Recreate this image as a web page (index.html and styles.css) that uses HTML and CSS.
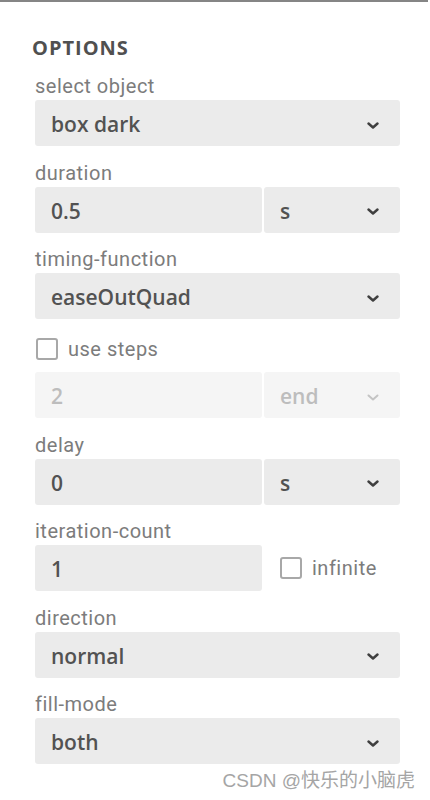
FILE: index.html
```html
<!DOCTYPE html>
<html lang="en">
<head>
<meta charset="utf-8">
<title>Options</title>
<link rel="stylesheet" href="styles.css">
</head>
<body>
<div class="topline"></div>
<section class="panel">
  <h2 class="title">OPTIONS</h2>

  <div class="field">
    <div class="label">select object</div>
    <div class="select"><span class="value">box dark</span><svg class="chev" viewBox="0 0 12 7"><path d="M1.5 1.5 L6 5.5 L10.5 1.5"/></svg></div>
  </div>

  <div class="field">
    <div class="label">duration</div>
    <div class="row">
      <div class="input"><span class="value">0.5</span></div>
      <div class="select"><span class="value">s</span><svg class="chev" viewBox="0 0 12 7"><path d="M1.5 1.5 L6 5.5 L10.5 1.5"/></svg></div>
    </div>
  </div>

  <div class="field">
    <div class="label">timing-function</div>
    <div class="select"><span class="value">easeOutQuad</span><svg class="chev" viewBox="0 0 12 7"><path d="M1.5 1.5 L6 5.5 L10.5 1.5"/></svg></div>
  </div>

  <div class="check steps-check"><span class="box"></span><span class="check-text">use steps</span></div>

  <div class="row disabled">
    <div class="input"><span class="value">2</span></div>
    <div class="select"><span class="value">end</span><svg class="chev" viewBox="0 0 12 7"><path d="M1.5 1.5 L6 5.5 L10.5 1.5"/></svg></div>
  </div>

  <div class="field">
    <div class="label">delay</div>
    <div class="row">
      <div class="input"><span class="value">0</span></div>
      <div class="select"><span class="value">s</span><svg class="chev" viewBox="0 0 12 7"><path d="M1.5 1.5 L6 5.5 L10.5 1.5"/></svg></div>
    </div>
  </div>

  <div class="field">
    <div class="label">iteration-count</div>
    <div class="row row-check">
      <div class="input"><span class="value">1</span></div>
      <div class="check"><span class="box"></span><span class="check-text">infinite</span></div>
    </div>
  </div>

  <div class="field">
    <div class="label">direction</div>
    <div class="select"><span class="value">normal</span><svg class="chev" viewBox="0 0 12 7"><path d="M1.5 1.5 L6 5.5 L10.5 1.5"/></svg></div>
  </div>

  <div class="field">
    <div class="label">fill-mode</div>
    <div class="select"><span class="value">both</span><svg class="chev" viewBox="0 0 12 7"><path d="M1.5 1.5 L6 5.5 L10.5 1.5"/></svg></div>
  </div>
</section>
<div class="watermark">CSDN @快乐的小脑虎</div>
</body>
</html>
```

FILE: styles.css
```css
html, body {
  margin: 0;
  padding: 0;
  background: #ffffff;
}

body {
  width: 430px;
  font-family: Roboto, "Liberation Sans", sans-serif;
}

.topline {
  width: 428px;
  height: 2px;
  background: #858585;
}

.panel {
  padding: 0 30px 0 35px;
  width: 365px;
}

.title {
  margin: 33.5px 0 0 -3px;
  font-family: "Open Sans", "Liberation Sans", sans-serif;
  font-weight: 700;
  font-size: 20px;
  line-height: 24px;
  letter-spacing: 1px;
  color: #505050;
}

.field {
  margin-top: 14.5px;
}

.label {
  font-size: 20px;
  line-height: 24px;
  letter-spacing: 0.5px;
  color: #7c7c7c;
  margin-bottom: 2px;
}

.select,
.input {
  height: 46px;
  box-sizing: border-box;
  background: #ebebeb;
  border-radius: 3px;
  display: flex;
  align-items: center;
  padding: 2px 21px 0 16px;
}

.select {
  justify-content: space-between;
}

.value {
  font-family: "Open Sans", "Liberation Sans", sans-serif;
  font-weight: 600;
  font-size: 21px;
  color: #525252;
}

.chev {
  width: 12px;
  height: 7px;
  fill: none;
  stroke: #3f3f3f;
  stroke-width: 2.4;
  stroke-linecap: round;
  stroke-linejoin: round;
  margin-top: 2px;
}

.row {
  display: grid;
  grid-template-columns: 227px 136px;
  column-gap: 2px;
}

.row-check {
  grid-template-columns: 227px auto;
  column-gap: 0;
}

.check {
  display: flex;
  align-items: center;
  gap: 10px;
  font-size: 20px;
  letter-spacing: 0.5px;
  color: #7c7c7c;
}

.row-check .check {
  padding-left: 18px;
}

.steps-check {
  margin: 19px 0 12px 1px;
  height: 22px;
}

.box {
  width: 22px;
  height: 22px;
  box-sizing: border-box;
  border: 2px solid #a8a8a8;
  border-radius: 3px;
  background: #ffffff;
  flex: none;
}

.disabled .select,
.disabled .input {
  background: #f5f5f5;
}

.disabled .value {
  color: #bdbdbd;
}

.disabled .chev {
  stroke: #c4c4c4;
  stroke-width: 2;
}

.watermark {
  margin-top: 5px;
  width: 415px;
  text-align: right;
  font-family: "Liberation Sans", "Noto Sans CJK SC", sans-serif;
  font-size: 19px;
  line-height: 24px;
  color: #a5a5a5;
}
```
